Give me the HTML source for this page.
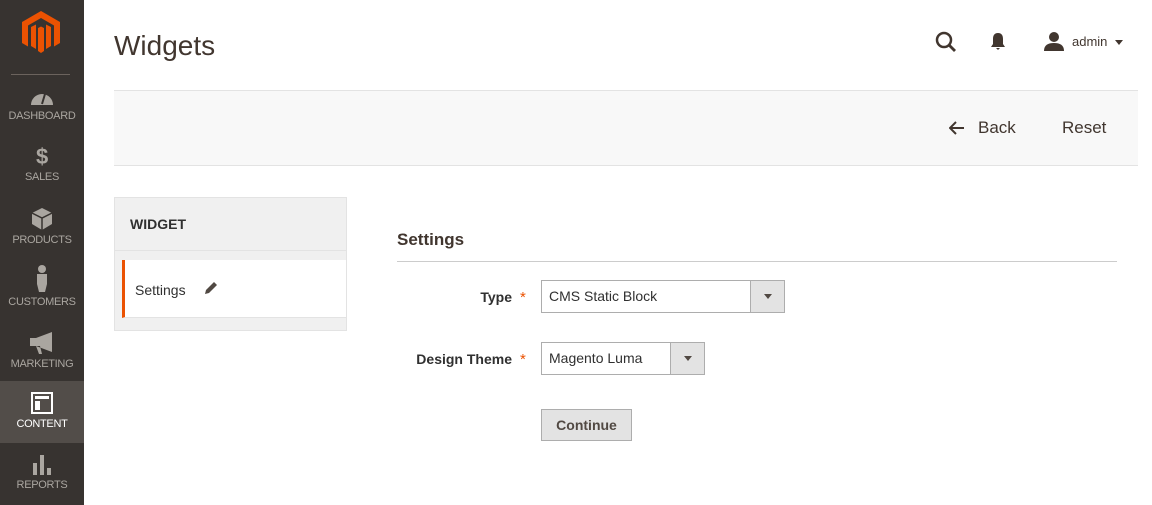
<!DOCTYPE html>
<html><head><style>
*{margin:0;padding:0;box-sizing:border-box}
body{width:1152px;height:505px;background:#fff;font-family:"Liberation Sans",sans-serif;color:#41362f;position:relative;overflow:hidden}
.a{position:absolute}
.nav{left:0;top:0;width:84px;height:505px;background:#373330}
.ni{position:absolute;left:0;width:84px;text-align:center;color:#aaa6a0;font-size:11px;letter-spacing:-0.3px}
.ni svg{display:block;margin:0 auto 4px}
.lbl{font-size:14px;font-weight:bold;color:#303030;text-align:right;width:200px}
.star{color:#eb5202;font-size:15px}
.sel{border:1px solid #adadad;background:#fff;font-size:14px;color:#303030;padding:7px 0 0 7px}
.sel .b{position:absolute;right:0;top:0;bottom:0;width:34px;background:#e3e3e3;border-left:1px solid #adadad}
.sel .b:after{content:"";position:absolute;left:13px;top:13px;border:4px solid transparent;border-top:5px solid #514943}
</style></head><body>
<div class="a nav">
 <svg class="a" style="left:22px;top:11px" width="38" height="42" viewBox="0 0 38 42"><path d="M19 0L38 11V32L32 35.5V14.5L19 7L6 14.5V35.5L0 32V11Z M16 17L19 15.5L22 17V40L19 42L16 40Z M9 16L14 13.5V38L9 35Z M29 16L24 13.5V38L29 35Z" fill="#eb5202"/></svg>
 <div class="a" style="left:11px;top:74px;width:59px;height:1px;background:#6b635d"></div>
 <div class="ni" style="top:88px"><svg width="24" height="18" viewBox="0 0 24 18"><path d="M1 17A11 11 0 0 1 23 17Z" fill="#aaa6a0"/><path d="M12 16L15 6" stroke="#373330" stroke-width="2"/></svg>DASHBOARD</div>
 <div class="ni" style="top:146px"><div style="font-size:22px;font-weight:bold;line-height:22px;color:#aaa6a0">$</div><div style="margin-top:3px">SALES</div></div>
 <div class="ni" style="top:208px"><svg width="20" height="22" viewBox="0 0 20 22"><path d="M10 0L20 5V16L10 22L0 16V5Z" fill="#aaa6a0"/><path d="M0 5L10 10L20 5M10 10V22" stroke="#373330" stroke-width="1.5" fill="none"/></svg>PRODUCTS</div>
 <div class="ni" style="top:265px"><svg width="12" height="27" viewBox="0 0 12 27"><circle cx="6" cy="4" r="4" fill="#aaa6a0"/><path d="M1 9H11V19L9 27H3L1 19Z" fill="#aaa6a0"/></svg>CUSTOMERS</div>
 <div class="ni" style="top:332px"><svg width="24" height="22" viewBox="0 0 24 22"><path d="M0 6H6L22 0V20L6 14H0Z M6 14L9 22H12L10 14Z" fill="#aaa6a0"/></svg>MARKETING</div>
 <div class="a" style="left:0;top:381px;width:84px;height:62px;background:#524d49"></div>
 <div class="ni" style="top:392px;color:#fff"><svg width="22" height="22" viewBox="0 0 22 22"><rect x="1" y="1" width="20" height="20" fill="none" stroke="#fff" stroke-width="2"/><rect x="4" y="4" width="14" height="3" fill="#fff"/><rect x="4" y="9" width="5" height="9" fill="#fff"/></svg>CONTENT</div>
 <div class="ni" style="top:455px"><svg width="20" height="20" viewBox="0 0 20 20"><rect x="1" y="8" width="4" height="12" fill="#aaa6a0"/><rect x="8" y="0" width="4" height="20" fill="#aaa6a0"/><rect x="15" y="13" width="4" height="7" fill="#aaa6a0"/></svg>REPORTS</div>
</div>
<div class="a" style="left:114px;top:30px;font-size:28px;color:#41362f">Widgets</div>
<svg class="a" style="left:935px;top:31px" width="22" height="22" viewBox="0 0 22 22"><circle cx="9" cy="9" r="7" fill="none" stroke="#41362f" stroke-width="2.5"/><path d="M14 14L20 20" stroke="#41362f" stroke-width="2.8"/></svg>
<svg class="a" style="left:990px;top:32px" width="16" height="19" viewBox="0 0 16 19"><path d="M8 1C4 1 3 4 3 7V12L1 15H15L13 12V7C13 4 12 1 8 1Z M6 16H10L8 18Z" fill="#41362f"/></svg>
<svg class="a" style="left:1044px;top:31px" width="20" height="20" viewBox="0 0 20 20"><circle cx="10" cy="6" r="5" fill="#41362f"/><path d="M0 20C0 14 4 12 10 12S20 14 20 20Z" fill="#41362f"/></svg>
<div class="a" style="left:1072px;top:34px;font-size:13px;color:#41362f">admin</div>
<div class="a" style="left:1115px;top:40px;border:4px solid transparent;border-top:5px solid #41362f"></div>
<div class="a" style="left:114px;top:90px;width:1024px;height:76px;background:#f8f8f8;border-top:1px solid #e3e3e3;border-bottom:1px solid #e3e3e3"></div>
<svg class="a" style="left:949px;top:121px" width="16" height="14" viewBox="0 0 16 14"><path d="M15 7H2M7 1L1 7L7 13" stroke="#41362f" stroke-width="2" fill="none"/></svg>
<div class="a" style="left:978px;top:118px;font-size:17px;color:#41362f">Back</div>
<div class="a" style="left:1062px;top:118px;font-size:17px;color:#41362f">Reset</div>
<div class="a" style="left:114px;top:197px;width:233px;height:134px;background:#f0f0f0;border:1px solid #e3e3e3"></div>
<div class="a" style="left:130px;top:216px;font-size:14px;font-weight:bold;color:#303030">WIDGET</div>
<div class="a" style="left:115px;top:250px;width:231px;height:1px;background:#e3e3e3"></div>
<div class="a" style="left:122px;top:260px;width:224px;height:58px;background:#fff;border-left:3px solid #eb5202;border-bottom:1px solid #e3e3e3"></div>
<div class="a" style="left:135px;top:282px;font-size:14px;color:#303030">Settings</div>
<svg class="a" style="left:204px;top:281px" width="14" height="14" viewBox="0 0 14 14"><path d="M1 13L2 9L10 1L13 4L5 12Z" fill="#514943"/></svg>
<div class="a" style="left:397px;top:230px;font-size:17px;font-weight:bold;color:#41362f">Settings</div>
<div class="a" style="left:397px;top:261px;width:720px;height:1px;background:#ccc"></div>
<div class="a lbl" style="left:312px;top:289px">Type</div><div class="a star" style="left:520px;top:289px">*</div>
<div class="a sel" style="left:541px;top:280px;width:244px;height:33px">CMS Static Block<div class="b"></div></div>
<div class="a lbl" style="left:312px;top:351px">Design Theme</div><div class="a star" style="left:520px;top:351px">*</div>
<div class="a sel" style="left:541px;top:342px;width:164px;height:33px">Magento Luma<div class="b"></div></div>
<div class="a" style="left:541px;top:409px;width:91px;height:32px;background:#e3e3e3;border:1px solid #adadad;font-size:14px;font-weight:bold;color:#514943;text-align:center;line-height:30px">Continue</div>
</body></html>
